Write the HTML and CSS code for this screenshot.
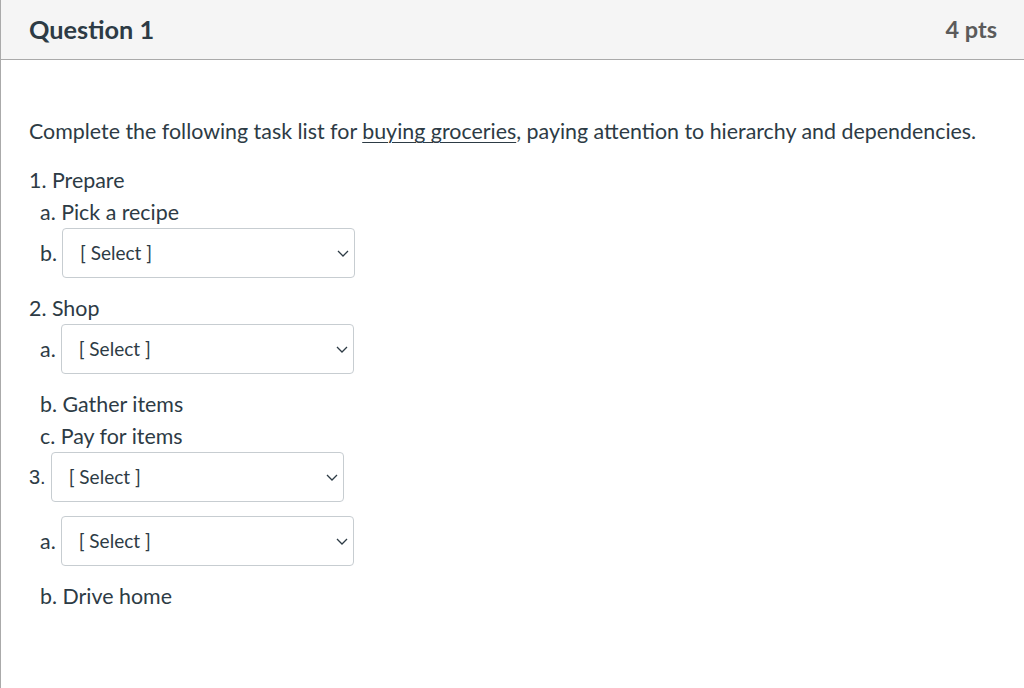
FILE: index.html
```html
<!DOCTYPE html>
<html lang="en">
<head>
<meta charset="utf-8">
<title>Question 1</title>
<link rel="stylesheet" href="styles.css">
</head>
<body>
<div class="question">
  <div class="q-header">
    <h2 class="q-title">Question 1</h2>
    <div class="q-points">4 pts</div>
  </div>
  <div class="q-body">
    <p class="q-text">Complete the following task list for <u>buying groceries</u>, paying attention to hierarchy and dependencies.</p>
    <div class="tasks">
      <div class="line">1. Prepare</div>
      <div class="sub">
        <div class="line">a. Pick a recipe</div>
        <div class="sel-row"><span class="lbl">b.</span><div class="select"><span>[ Select ]</span><svg width="12" height="7" viewBox="0 0 12 7"><path d="M1 1l5 5 5-5" fill="none" stroke="#2d3b45" stroke-width="1.3"/></svg></div></div>
      </div>
      <div class="line">2. Shop</div>
      <div class="sub">
        <div class="sel-row"><span class="lbl">a.</span><div class="select"><span>[ Select ]</span><svg width="12" height="7" viewBox="0 0 12 7"><path d="M1 1l5 5 5-5" fill="none" stroke="#2d3b45" stroke-width="1.3"/></svg></div></div>
        <div class="line">b. Gather items</div>
        <div class="line">c. Pay for items</div>
      </div>
      <div class="sel-row"><span class="lbl arial">3.</span><div class="select"><span>[ Select ]</span><svg width="12" height="7" viewBox="0 0 12 7"><path d="M1 1l5 5 5-5" fill="none" stroke="#2d3b45" stroke-width="1.3"/></svg></div></div>
      <div class="sub">
        <div class="sel-row"><span class="lbl">a.</span><div class="select"><span>[ Select ]</span><svg width="12" height="7" viewBox="0 0 12 7"><path d="M1 1l5 5 5-5" fill="none" stroke="#2d3b45" stroke-width="1.3"/></svg></div></div>
        <div class="line">b. Drive home</div>
      </div>
    </div>
  </div>
</div>
</body>
</html>
```

FILE: styles.css
```css
html, body {
  margin: 0;
  padding: 0;
  background: #ffffff;
}
body {
  font-family: Lato, "Open Sans", sans-serif;
  color: #2d3b45;
}
.question {
  border-left: 1px solid #aaaaaa;
  height: 688px;
  box-sizing: border-box;
}
.q-header {
  height: 60px;
  box-sizing: border-box;
  background: #f5f5f5;
  border-bottom: 1px solid #aaaaaa;
  display: flex;
  align-items: center;
  justify-content: space-between;
  padding: 0 27px 2px 28px;
}
.q-title {
  margin: 0;
  font-size: 25.3px;
  font-weight: 700;
  color: #2d3b45;
}
.q-points {
  font-size: 23.5px;
  font-weight: 700;
  color: #5b5b5b;
}
.q-body {
  padding: 55px 28px 0 28px;
  font-size: 21.4px;
}
.q-text {
  margin: 0 0 17px 0;
  line-height: 32px;
}
.q-text u {
  text-decoration-thickness: 1px;
  text-underline-offset: 3px;
}
.line {
  line-height: 32px;
}
.sub {
  padding-left: 11px;
}
.sel-row {
  display: flex;
  align-items: center;
  gap: 5px;
  margin-bottom: 14px;
}
.lbl {
  line-height: 32px;
}
.lbl.arial {
  font-family: "Liberation Sans", Arial, sans-serif;
  font-size: 20px;
}
.select {
  width: 293px;
  height: 50px;
  box-sizing: border-box;
  border: 1px solid #c7cdd1;
  border-radius: 4px;
  display: flex;
  align-items: center;
  justify-content: space-between;
  padding: 0 5px 0 17px;
  font-size: 19px;
}
.select span {
  margin-top: -2px;
}
```
